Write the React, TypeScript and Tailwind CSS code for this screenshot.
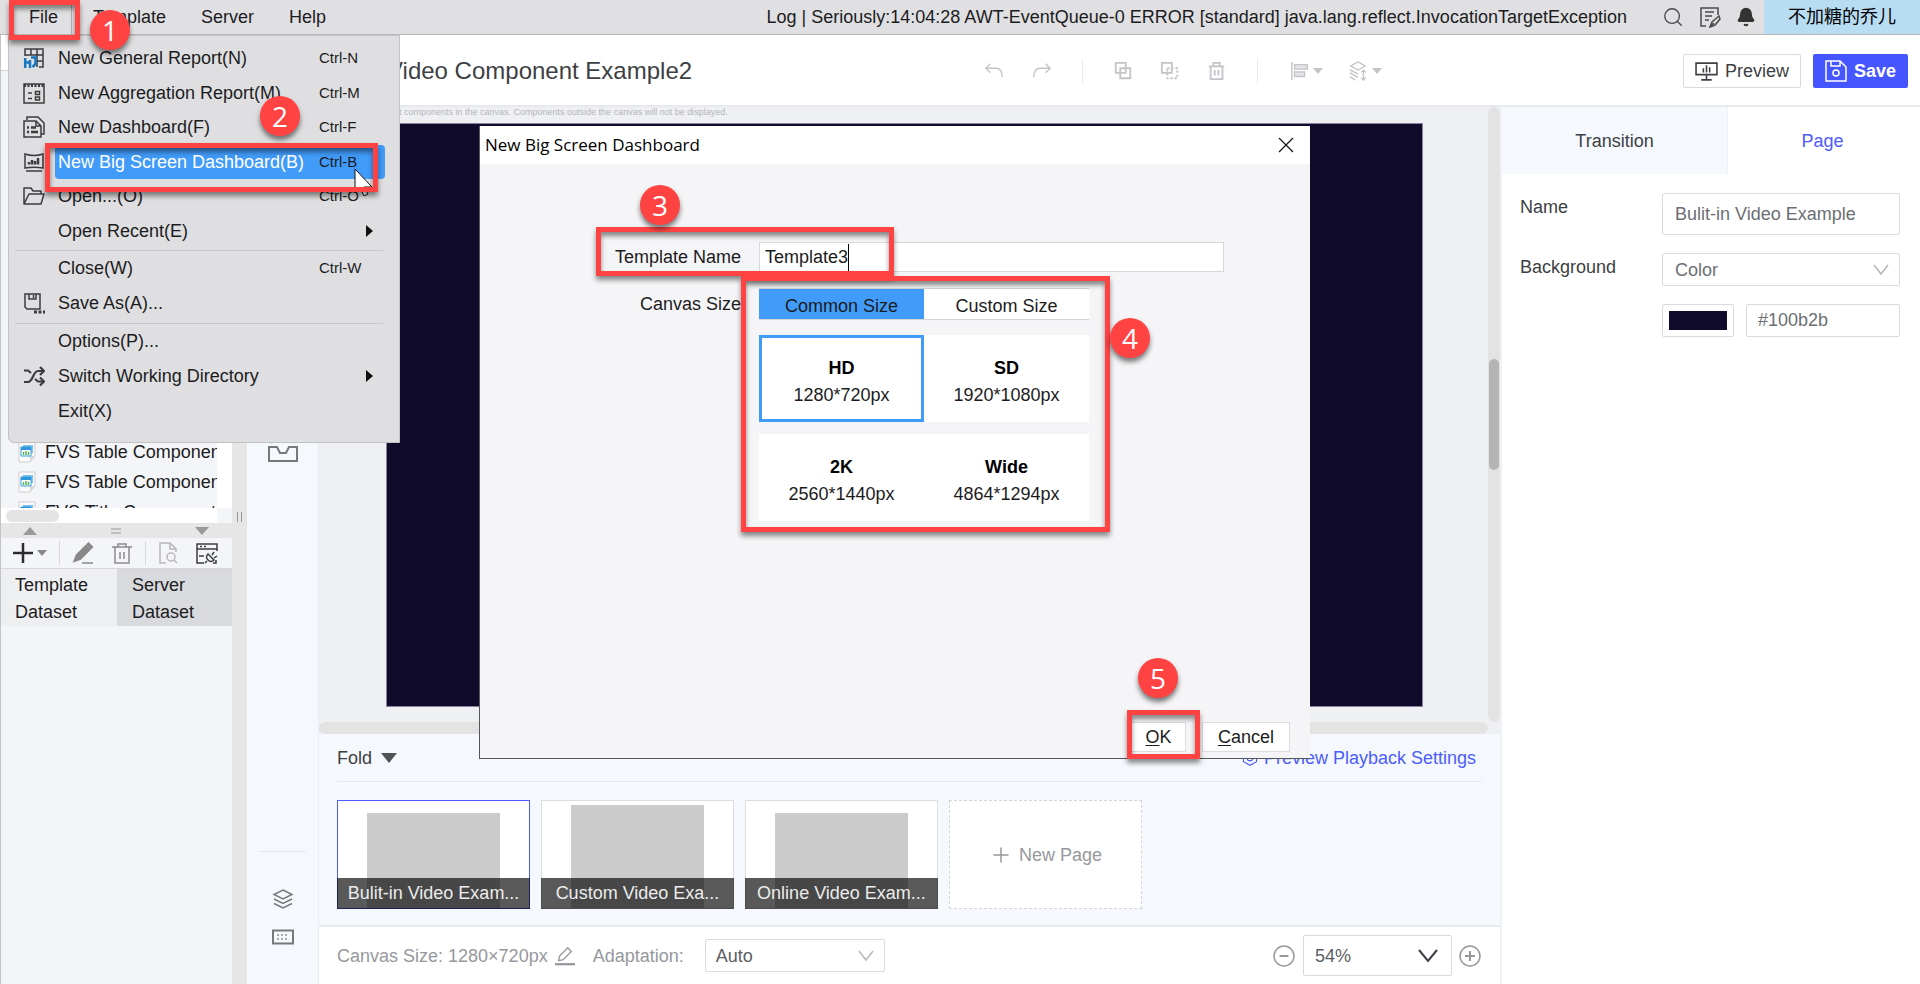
import { useState } from 'react';
import type { ReactNode } from 'react';
import { Bell, ChevronDown, Plus, Search } from 'lucide-react';

// ── Small icons ────────────────────────────────────────────────────────────────

function Icon({ size = 22, className = '', children }: { size?: number; className?: string; children: ReactNode }) {
  return (
    <svg
      width={size}
      height={size}
      viewBox="0 0 22 22"
      fill="none"
      stroke="currentColor"
      strokeWidth="1.5"
      className={`shrink-0 ${className}`}
      aria-hidden="true"
    >
      {children}
    </svg>
  );
}

const GridReportIcon = () => (
  <Icon>
    <path d="M2 9V2h18v18h-4M2 8h18M8 2v6M14 2v18M14 14h6" />
    <path d="M2.200 11v10M2.200 15.500h4M7 13v8" stroke="#1677c2" strokeWidth="2.500" />
    <path d="M8 10.500h4.500V17L9.500 20" stroke="#1677c2" strokeWidth="2.500" />
  </Icon>
);

const AggregationIcon = () => (
  <Icon>
    <rect x="1" y="2" width="20" height="19" />
    <path d="M1 3.500h20" strokeWidth="3" strokeDasharray="2 1.5" />
    <path d="M5 11h4M5 16.500h4M12.500 9.500h4v3h-4zM12.500 15h4v3h-4z" />
  </Icon>
);

const DashboardIcon = () => (
  <Icon>
    <path d="M4 4V1h11l6 6v11h-3" />
    <path d="M1 5h12l5 5v11H1zM13 5v5h5" />
    <path d="M4 11.500h2M8 11.500h5M4 16h2M8 16h7" strokeWidth="2.500" />
  </Icon>
);

const BigScreenIcon = () => (
  <Icon>
    <path d="M2 3c6 2 12 2 18 0v14c-6-1-12-1-18 0zM3 20h16" />
    <path d="M6 13.500V11M9 13.500V9M12 13.500V10M15 13.500V7" strokeWidth="2.500" />
  </Icon>
);

const FolderIcon = () => (
  <Icon>
    <path d="M1 19V3h7l2 3h8v3M1 19 6 9h15l-3 10z" strokeLinejoin="round" />
  </Icon>
);

const SaveAsIcon = () => (
  <Icon>
    <path d="M2 2h15v15H4l-2-2zM6 2v5h7V2M10.500 3v3" />
    <path d="M11 20h11" strokeWidth="3" strokeDasharray="3 1.500" />
  </Icon>
);

const ShuffleIcon = () => (
  <Icon>
    <path d="M1 5.500h4l3 2.500M1 17h4c5 0 5-11 10-11h5M12 14l3 2.500h5" strokeWidth="2.200" />
    <path d="m17 2 4 4-4 4M17 12.500l4 4-4 4" strokeWidth="2.200" />
  </Icon>
);

const TrashIcon = ({ size = 22 }: { size?: number }) => (
  <Icon size={size}>
    <path d="M1 5h20M7 5V2h8v3M4 5v16h14V5M9 10v7M13 10v7" />
  </Icon>
);

const LayersIcon = ({ size = 20 }: { size?: number }) => (
  <Icon size={size}>
    <path d="m11 2 9 4.500-9 4.500-9-4.500zM2 11l9 4.500 9-4.500M2 15.500 11 20l9-4.500" />
  </Icon>
);

const FrmIcon = () => (
  <svg width="18" height="22" viewBox="0 0 18 22" className="shrink-0" aria-hidden="true">
    <path d="M1 1h16v14l-5 6H1z" fill="#fafafa" stroke="#cfcfcf" />
    <path d="M12 21v-6h5z" fill="#d8d8d8" />
    <path d="M5 4h10v8H5z" fill="#7cc4ef" />
    <path d="M3 6h10v9H3z" fill="#fff" stroke="#3b9fdd" />
    <path d="M3 6h10v3H3z" fill="#2f97dc" />
    <path d="M5.500 14v-3M8 14v-4M10.500 14v-3" stroke="#52b153" strokeWidth="1.500" />
  </svg>
);

const Caret = ({ className = '' }: { className?: string }) => (
  <svg width="10" height="6" viewBox="0 0 10 6" className={`shrink-0 ${className}`} aria-hidden="true">
    <path d="M0 0h10L5 6z" fill="currentColor" />
  </svg>
);

// ── Data ───────────────────────────────────────────────────────────────────────

interface MenuEntry {
  label: string;
  icon?: ReactNode;
  shortcut?: string;
  submenu?: boolean;
  active?: boolean;
}

const FILE_MENU_NEW: MenuEntry[] = [
  { label: 'New General Report(N)', icon: <GridReportIcon />, shortcut: 'Ctrl-N' },
  { label: 'New Aggregation Report(M)', icon: <AggregationIcon />, shortcut: 'Ctrl-M' },
  { label: 'New Dashboard(F)', icon: <DashboardIcon />, shortcut: 'Ctrl-F' },
  { label: 'New Big Screen Dashboard(B)', icon: <BigScreenIcon />, shortcut: 'Ctrl-B', active: true },
  { label: 'Open...(O)', icon: <FolderIcon />, shortcut: 'Ctrl-O' },
  { label: 'Open Recent(E)', submenu: true },
];

const FILE_MENU_SAVE: MenuEntry[] = [
  { label: 'Close(W)', shortcut: 'Ctrl-W' },
  { label: 'Save As(A)...', icon: <SaveAsIcon /> },
];

const FILE_MENU_APP: MenuEntry[] = [
  { label: 'Options(P)...' },
  { label: 'Switch Working Directory', icon: <ShuffleIcon />, submenu: true },
  { label: 'Exit(X)' },
];

const TREE = ['FVS Table Component', 'FVS Table Component', 'FVS Title Component I'];

const PAGES = [
  { label: 'Bulit-in Video Exam...', offset: 'mt-3', active: true },
  { label: 'Custom Video Exa...', offset: 'mt-1', active: false },
  { label: 'Online Video Exam...', offset: 'mt-3', active: false },
];

const SIZES = [
  { name: 'HD', size: '1280*720px' },
  { name: 'SD', size: '1920*1080px' },
  { name: '2K', size: '2560*1440px' },
  { name: 'Wide', size: '4864*1294px' },
];

// ── Top bar and File menu ──────────────────────────────────────────────────────

function MenuBar() {
  return (
    <header className="flex h-[35px] shrink-0 items-stretch border-b border-[#b8b8ba] bg-[#e0e0e2] text-[#1c1c1e]">
      <nav className="flex items-stretch">
        <button className="ml-2 border-r border-[#b0b0b2] pr-[13px] pl-[21px]">File</button>
        <button className="ml-[21px]">Template</button>
        <button className="ml-[35px]">Server</button>
        <button className="ml-[35px]">Help</button>
      </nav>
      <p className="ml-auto truncate leading-[34px]">
        Log | Seriously:14:04:28 AWT-EventQueue-0 ERROR [standard] java.lang.reflect.InvocationTargetException
      </p>
      <div className="ml-[35px] flex items-center gap-[15px] pr-2 text-[#4a4a4c]">
        <button aria-label="Search">
          <Search size={22} strokeWidth={1.5} />
        </button>
        <button aria-label="Log">
          <Icon>
            <path d="M7 20H2V2h17v7M6 6h9M6 10h7M6 14h4" />
            <path d="m20 10-7 6-2 5 5-2 5-6zM11 21l4-4" />
          </Icon>
        </button>
        <button aria-label="Notifications">
          <Bell size={20} fill="#333" stroke="#333" />
        </button>
      </div>
      <button className="w-[156px] bg-[#b8dcf2] text-black">不加糖的乔儿</button>
    </header>
  );
}

function MenuRow({ entry }: { entry: MenuEntry }) {
  return (
    <li className="flex">
      <button className="flex w-full items-center pl-[14px] text-left">
        <span className="flex w-8 shrink-0 text-[#3c3c3e]">{entry.icon}</span>
        <span
          className={
            entry.active
              ? 'mr-3.5 flex h-full flex-1 items-center rounded bg-[#419bf9] pl-[3px] text-white'
              : 'mr-3.5 flex h-full flex-1 items-center pl-[3px]'
          }
        >
          {entry.label}
          {entry.shortcut && <kbd className="ml-auto w-[66px] font-[inherit] text-[15px] text-[#1c1c1e]">{entry.shortcut}</kbd>}
          {entry.submenu && (
            <svg width="7" height="12" viewBox="0 0 7 12" className="mr-3 ml-auto" aria-hidden="true">
              <path d="M0 0v12l7-6z" fill="#111" />
            </svg>
          )}
        </span>
      </button>
    </li>
  );
}

function FileMenu() {
  return (
    <div className="absolute top-[35px] left-2 w-[392px] rounded-bl-md border border-[#c2c2c4] bg-[#dfdfe1] pt-[5px] pb-3.5 text-[#1c1c1e]">
      <ul className="grid h-[207px] auto-rows-fr">
        {FILE_MENU_NEW.map((entry) => (
          <MenuRow key={entry.label} entry={entry} />
        ))}
      </ul>
      <hr className="mt-0.5 mr-4 ml-1.5 border-[#c8c8ca]" />
      <ul className="grid h-[69px] auto-rows-fr">
        {FILE_MENU_SAVE.map((entry) => (
          <MenuRow key={entry.label} entry={entry} />
        ))}
      </ul>
      <hr className="mt-[3px] mr-4 ml-1.5 border-[#c8c8ca]" />
      <ul className="grid h-[104px] auto-rows-fr">
        {FILE_MENU_APP.map((entry) => (
          <MenuRow key={entry.label} entry={entry} />
        ))}
      </ul>
    </div>
  );
}

// ── Left side: template tree and datasets ──────────────────────────────────────

function Sidebar() {
  return (
    <aside className="flex w-[232px] shrink-0 flex-col border-l border-[#c4c4c6] bg-[#f4f5f8] text-[#1c1c1e]">
      <div className="h-[36px] shrink-0 border-b border-[#d4d4d8] bg-white" />
      <div className="flex h-[437px] shrink-0 flex-col justify-start overflow-hidden bg-white pr-[15px]">
        <ul className="bg-[#f4f5f8] pt-[366px]">
          {TREE.map((name, i) => (
            <li key={i} className="flex h-[30px] items-center gap-[9px] overflow-hidden pl-[17px] whitespace-nowrap">
              <FrmIcon />
              {name}
            </li>
          ))}
        </ul>
      </div>
      <div className="flex h-[15px] shrink-0 items-center bg-white pl-[5px]">
        <div className="h-3 w-[53px] rounded-full bg-[#e4e4e4]" />
        <div className="ml-auto h-full w-[15px] bg-[#f4f5f8]" />
      </div>
      <div className="flex h-[15px] shrink-0 items-center justify-between bg-[#e6e6e6] pr-[23px] pl-[22px] text-[#999]">
        <svg width="14" height="8" viewBox="0 0 14 8" aria-hidden="true">
          <path d="M0 8h14L7 0z" fill="currentColor" />
        </svg>
        <svg width="10" height="6" viewBox="0 0 10 6" aria-hidden="true">
          <path d="M0 1h10M0 5h10" stroke="currentColor" />
        </svg>
        <svg width="14" height="8" viewBox="0 0 14 8" aria-hidden="true">
          <path d="M0 0h14L7 8z" fill="currentColor" />
        </svg>
      </div>
      <div className="flex h-[31px] shrink-0 items-center border-b border-[#d6d6da] pr-3.5 pl-[11px] text-[#555]">
        <button aria-label="Add dataset" className="flex items-center gap-[3px]">
          <Icon>
            <path d="M11 1v20M1 11h20" stroke="#2c2c2e" strokeWidth="2.500" />
          </Icon>
          <Caret className="text-[#888]" />
        </button>
        <span className="ml-3 h-6 w-px bg-[#d8d8dc]" />
        <button aria-label="Edit" className="ml-3 text-[#888]">
          <Icon>
            <path d="M2 19.500 4.500 13 14 3.500l4 4L8.500 17z" fill="currentColor" />
            <path d="m15 2.500 1.500-1.500 4 4L19 6.500z" fill="currentColor" />
            <path d="M10 21h11" />
          </Icon>
        </button>
        <button aria-label="Delete" className="ml-[17px] text-[#8a8a8c]">
          <TrashIcon />
        </button>
        <span className="ml-3 h-6 w-px bg-[#d8d8dc]" />
        <button aria-label="Preview dataset" className="ml-3 text-[#b8b8ba]">
          <Icon>
            <path d="M8 21H2V1h10l6 6v3M12 1v6h6" />
            <circle cx="13" cy="15" r="4" />
            <path d="m16 18 3 3" />
          </Icon>
        </button>
        <button aria-label="Connection" className="ml-auto text-[#3c3c3e]">
          <Icon>
            <path d="M8 21H1V2h20v7M1 7h20M4 4.500h2M8 4.500h2M3 14h5" />
            <path d="m12 12 6 6c-2 2-4 2-6 0s-2-4 0-6zM16 13l2-3M18 16l3-2M11 19l-2 2M20 18v3h-3" />
          </Icon>
        </button>
      </div>
      <div className="flex shrink-0 leading-[27px]">
        <button className="w-[116px] bg-[#eeeff1] pt-[3px] pl-3.5 text-left">
          Template
          <br />
          Dataset
        </button>
        <button className="flex-1 bg-[#d8dadd] pt-[3px] pl-[15px] text-left">
          Server
          <br />
          Dataset
        </button>
      </div>
    </aside>
  );
}

// ── Editor ─────────────────────────────────────────────────────────────────────

function EditorHeader() {
  return (
    <div className="flex h-[72px] shrink-0 items-center border-b-2 border-[#e8e9ee] bg-white pt-0.5 pr-3">
      <h1 className="w-[737px] shrink-0 pl-[140px] text-2xl text-[#3d3f44]">Video Component Example2</h1>
      <div className="flex items-center text-[#c3c4c8]">
        <button aria-label="Undo">
          <Icon size={20}>
            <path d="m7 3-5 5 5 5M2 8h11c5 0 7 3 7 10" />
          </Icon>
        </button>
        <button aria-label="Redo" className="ml-7">
          <Icon size={20}>
            <path d="m15 3 5 5-5 5M20 8H9c-5 0-7 3-7 10" />
          </Icon>
        </button>
        <span className="ml-[30px] h-6 w-px bg-[#e8e8ec]" />
        <button aria-label="Group" className="ml-[30px]">
          <Icon size={20}>
            <path d="M3 2h11v11H3zM8 8h11v11H8z" strokeWidth="2" />
          </Icon>
        </button>
        <button aria-label="Ungroup" className="ml-[27px]">
          <Icon size={20}>
            <path d="M2 2h11v11H2z" strokeWidth="2" />
            <path d="M8 8h11v11H8z" strokeWidth="2" strokeDasharray="2.500 2" />
          </Icon>
        </button>
        <button aria-label="Delete" className="ml-[27px]">
          <Icon size={20}>
            <path d="M2 6h17M7 5V2h7v3M4 6v14h13V6M8.500 10v6M12.500 10v6" strokeWidth="2" />
          </Icon>
        </button>
        <span className="ml-[30px] h-6 w-px bg-[#e8e8ec]" />
        <button aria-label="Align" className="ml-8 flex items-center gap-[3px]">
          <Icon size={20}>
            <path d="M2 1v20" />
            <path d="M5 4h14v5H5zM5 12h11v5H5z" fill="#e4e4e8" />
          </Icon>
          <Caret />
        </button>
        <button aria-label="Arrange" className="ml-[25px] flex items-center gap-1">
          <Icon size={20}>
            <path d="m11 1 8 4.500-8 4.500-8-4.500zM2 9.500l9 5M2 13l9 5M2 17l6 4M17 10v11M14.500 12.500 17 10l2.500 2.500M14.500 18.500 17 21l2.500-2.500" />
          </Icon>
          <Caret />
        </button>
      </div>
      <button className="ml-auto flex h-[34px] items-center gap-[7px] rounded-xs border border-[#d9dade] bg-white px-[11px] text-[#3d3f44]">
        <Icon size={23}>
          <path d="M1 3h20v11H1zM6 19h10M11 14v5" />
          <path d="M8 12V8M11 12V5M14 12V7" />
        </Icon>
        Preview
      </button>
      <button className="ml-3 flex h-[34px] items-center gap-[7px] rounded-xs bg-[#4555ff] px-3 font-bold text-white">
        <Icon>
          <path d="M1 1h14l6 6v14H1zM6 1v5h9V1" />
          <circle cx="11" cy="13" r="3" />
        </Icon>
        Save
      </button>
    </div>
  );
}

function ToolStrip() {
  return (
    <div className="flex w-[72px] shrink-0 flex-col items-center border-r border-[#ecedf2] bg-[#f5f9fd] pt-[326px] pb-9 text-[#76787c]">
      <button aria-label="Assets">
        <svg width="32" height="32" viewBox="0 0 32 32" fill="none" stroke="currentColor" strokeWidth="2" aria-hidden="true">
          <path d="M2 14h8l3 6h6l3-6h8v14H2zM4 10l5-8h14l5 8" />
        </svg>
      </button>
      <hr className="mt-auto mb-9 w-[47px] border-[#e4e6ea]" />
      <button aria-label="Layers">
        <LayersIcon size={22} />
      </button>
      <button aria-label="Keyboard" className="mt-4">
        <Icon>
          <path d="M1 4.500h20v13H1z" strokeWidth="2" />
          <path d="M5 9h12M5 13h12" strokeWidth="2" strokeDasharray="2 2" opacity="0.6" />
        </Icon>
      </button>
    </div>
  );
}

function PageStrip() {
  return (
    <section className="h-[191px] shrink-0 bg-[#f5f9fd] pl-[18px] text-[#3d3f44]">
      <div className="mr-[18px] flex h-12 items-center border-b border-[#e6e8ec]">
        <button className="flex items-center gap-[9px]">
          Fold
          <svg width="16" height="10" viewBox="0 0 16 10" aria-hidden="true">
            <path d="M0 0h16L8 10z" fill="#505256" />
          </svg>
        </button>
        <a href="#playback" className="mr-1.5 ml-auto flex items-center gap-1.5 text-[#4c5cff]">
          <Icon size={16}>
            <path d="m11 1 9 5v10l-9 5-9-5V6z" />
            <circle cx="11" cy="11" r="4" />
          </Icon>
          Preview Playback Settings
        </a>
      </div>
      <div className="mt-[18px] flex gap-[11px]">
        {PAGES.map((page) => (
          <button
            key={page.label}
            className={
              page.active
                ? 'relative flex h-[109px] w-[193px] flex-col items-center border border-[#4c5cff] bg-white'
                : 'relative flex h-[109px] w-[193px] flex-col items-center border border-[#dcdde0] bg-white'
            }
          >
            <span className={`${page.offset} w-[133px] flex-1 bg-[#ccc]`} />
            <span className="absolute -inset-x-px -bottom-px h-[31px] truncate bg-black/65 leading-[30px] text-[#ececec]">
              {page.label}
            </span>
          </button>
        ))}
        <button className="flex h-[109px] w-[193px] items-center justify-center gap-1.5 border border-dashed border-[#d4d5d9] bg-white text-[#96989d]">
          <Plus size={24} strokeWidth={1.5} />
          New Page
        </button>
      </div>
    </section>
  );
}

function StatusBar() {
  return (
    <footer className="flex h-[59px] shrink-0 items-center border-t-2 border-[#e8e9ee] bg-white pr-[19px] pl-[18px] text-[#96989d]">
      <span>Canvas Size: 1280×720px</span>
      <button aria-label="Edit canvas size" className="ml-[7px]">
        <Icon size={20}>
          <path d="m4 16 1-5 9-9 4 4-9 9z" />
          <path d="M0 20h22" strokeWidth="2.500" />
        </Icon>
      </button>
      <label htmlFor="adaptation" className="ml-[18px]">
        Adaptation:
      </label>
      <div className="relative ml-[21px]">
        <select
          id="adaptation"
          className="h-[33px] w-[180px] appearance-none rounded-xs border border-[#d9dade] bg-white pl-2.5 text-[#5c5e63]"
        >
          <option>Auto</option>
        </select>
        <svg width="16" height="12" viewBox="0 0 16 12" className="pointer-events-none absolute top-[11px] right-[11px]" aria-hidden="true">
          <path d="m1 1 7 9 7-9" fill="none" stroke="#b4b6ba" strokeWidth="1.500" />
        </svg>
      </div>
      <button aria-label="Zoom out" className="ml-auto">
        <Icon size={22}>
          <circle cx="11" cy="11" r="10" />
          <path d="M6.500 11h9" strokeWidth="2" />
        </Icon>
      </button>
      <div className="relative ml-2">
        <select
          aria-label="Zoom"
          className="h-[41px] w-[149px] appearance-none rounded-xs border border-[#d9dade] bg-white pl-[11px] text-[#5c5e63]"
        >
          <option>54%</option>
        </select>
        <svg width="20" height="14" viewBox="0 0 20 14" className="pointer-events-none absolute top-3.5 right-3.5" aria-hidden="true">
          <path d="m1 1 9 11 9-11" fill="none" stroke="#3d3f44" strokeWidth="2" />
        </svg>
      </div>
      <button aria-label="Zoom in" className="ml-[7px]">
        <Icon size={22}>
          <circle cx="11" cy="11" r="10" />
          <path d="M6 11h10M11 6v10" strokeWidth="2" />
        </Icon>
      </button>
    </footer>
  );
}

function CanvasArea() {
  return (
    <main className="flex min-w-0 flex-1 flex-col bg-[#eff0f4]">
      <div className="flex min-h-0 flex-1">
        <div className="flex flex-1 flex-col pr-[65px] pb-[15px] pl-[67px]">
          <p className="h-4 text-[9px] leading-[10px] text-[#b4b5ba]">
            <span className="ml-[13px]">t components in the canvas. Components outside the canvas will not be displayed.</span>
          </p>
          <div className="flex-1 border border-[#86849a] bg-[#100b2b]" />
        </div>
        <div className="w-3 rounded-full bg-[#e3e3e3] pt-[252px]">
          <div className="mx-px h-[111px] rounded-full bg-[#b4b4b4]" />
        </div>
      </div>
      <div className="h-3 shrink-0 pr-3">
        <div className="h-full rounded-full bg-[#e3e3e3]" />
      </div>
      <PageStrip />
      <StatusBar />
    </main>
  );
}

function PropertyPanel() {
  return (
    <aside className="w-[420px] shrink-0 border-l-2 border-[#eef1f5] bg-white text-[#3d3f44]">
      <div className="flex h-[67px] pr-[3px]">
        <button className="w-[226px] border-r border-[#eef1f5] bg-[#f5f9fd]">Transition</button>
        <button className="flex-1 text-[#4c5cff]">Page</button>
      </div>
      <div className="grid grid-cols-[142px_minmax(0,1fr)] gap-y-[18px] pt-[19px] pr-5 pl-[18px]">
        <label htmlFor="page-name" className="pt-0.5">
          Name
        </label>
        <input
          id="page-name"
          defaultValue="Bulit-in Video Example"
          className="h-[42px] w-full rounded-xs border border-[#d9dade] px-3 text-[#6c6e73]"
        />
        <label htmlFor="page-background" className="pt-0.5">
          Background
        </label>
        <div className="relative">
          <select
            id="page-background"
            className="h-[33px] w-full appearance-none rounded-xs border border-[#d9dade] bg-white pl-3 text-[#6c6e73]"
          >
            <option>Color</option>
          </select>
          <svg width="16" height="12" viewBox="0 0 16 12" className="pointer-events-none absolute top-[11px] right-[11px]" aria-hidden="true">
            <path d="m1 1 7 9 7-9" fill="none" stroke="#b4b6ba" strokeWidth="1.500" />
          </svg>
        </div>
        <div className="col-start-2 flex gap-3">
          <button aria-label="Pick colour" className="h-[33px] w-[72px] rounded-xs border border-[#d9dade] p-1.5">
            <span className="block h-full w-full bg-[#100b2b]" />
          </button>
          <input
            aria-label="Background colour"
            defaultValue="#100b2b"
            className="h-[33px] min-w-0 flex-1 rounded-xs border border-[#d9dade] px-[11px] text-[#6c6e73]"
          />
        </div>
      </div>
    </aside>
  );
}

// ── New Big Screen Dashboard dialog ────────────────────────────────────────────

function NewDashboardDialog() {
  const [name, setName] = useState('Template3');
  const [selected, setSelected] = useState('HD');

  return (
    <div
      role="dialog"
      aria-labelledby="dialog-title"
      className="absolute top-[126px] left-[479px] flex h-[633px] w-[831px] flex-col border-b border-l border-[#55565a] bg-[#f5f5f7] text-[#1c1c1e]"
    >
      <div className="flex h-[38px] items-center justify-between bg-white pr-4 pl-[5px] text-black">
        <h2 id="dialog-title" className="font-['Open_Sans','Noto_Sans',sans-serif] text-[17px]">
          New Big Screen Dashboard
        </h2>
        <button aria-label="Close">
          <svg width="16" height="16" viewBox="0 0 16 16" stroke="#111" strokeWidth="1.2" aria-hidden="true">
            <path d="m1 1 14 14M15 1 1 15" />
          </svg>
        </button>
      </div>
      <div className="grid grid-cols-[261px_1fr] gap-x-[18px] pt-[78px] pr-[86px]">
        <label htmlFor="template-name" className="text-right leading-[30px]">
          Template Name
        </label>
        <div className="flex h-[30px] items-center border border-[#d8d8dc] bg-white pl-[5px]">
          <input
            id="template-name"
            value={name}
            onChange={(e) => setName(e.target.value)}
            className="field-sizing-content outline-none"
          />
          <span className="h-[27px] w-px bg-black" />
        </div>
        <span className="mt-4 text-right leading-[32px]">Canvas Size</span>
        <div className="mt-4 w-[330px]">
          <div className="grid grid-cols-2 border-y border-[#d4d4d8] leading-[34px]">
            <button className="h-[30px] bg-[#419bf9]">Common Size</button>
            <button className="h-[30px] bg-white">Custom Size</button>
          </div>
          <div className="mt-[15px] grid grid-cols-2 gap-y-3">
            {SIZES.map((s) => (
              <button
                key={s.name}
                onClick={() => setSelected(s.name)}
                className={
                  selected === s.name
                    ? 'h-[87px] border-[3px] border-[#419bf9] bg-white pt-1.5 leading-[27px]'
                    : 'h-[87px] border-[3px] border-white bg-white pt-1.5 leading-[27px]'
                }
              >
                <b className="block text-black">{s.name}</b>
                {s.size}
              </button>
            ))}
          </div>
        </div>
      </div>
      <div className="mt-auto mr-5 mb-1.5 flex justify-end gap-4">
        <button className="h-[30px] w-[55px] border border-[#dcdce0] bg-white">
          <span className="underline underline-offset-2">O</span>K
        </button>
        <button className="h-[30px] w-[88px] border border-[#dcdce0] bg-white">
          <span className="underline underline-offset-2">C</span>ancel
        </button>
      </div>
    </div>
  );
}

// ── Step markers ───────────────────────────────────────────────────────────────

function StepBox({ className }: { className: string }) {
  return (
    <div
      className={`pointer-events-none absolute border-5 border-[#ff4343] shadow-[0_4px_5px_rgba(0,0,0,0.45),inset_0_4px_5px_rgba(0,0,0,0.45)] ${className}`}
    />
  );
}

function StepBadge({ n, className }: { n: number; className: string }) {
  return (
    <div
      className={`pointer-events-none absolute flex size-10 items-center justify-center rounded-full bg-[#ff4343] font-['Open_Sans',sans-serif] text-[28px] text-white shadow-[0_4px_5px_rgba(0,0,0,0.5)] ${className}`}
    >
      {n}
    </div>
  );
}

export default function App() {
  return (
    <div className="relative flex min-h-screen flex-col overflow-hidden bg-white font-['Liberation_Sans',Arial,'Noto_Sans_CJK_SC',sans-serif] text-[18px] leading-[24px]">
      <MenuBar />
      <div className="flex flex-1">
        <Sidebar />
        <div className="flex w-[15px] shrink-0 items-start justify-center bg-[#e6e6e6] pt-[477px]">
          <span className="h-[10px] w-[5px] border-x border-[#999]" />
        </div>
        <div className="flex min-w-0 flex-1 flex-col">
          <EditorHeader />
          <div className="flex flex-1">
            <ToolStrip />
            <CanvasArea />
            <PropertyPanel />
          </div>
        </div>
      </div>

      <NewDashboardDialog />
      <FileMenu />

      {/* Mouse pointer over the highlighted entry */}
      <svg width="20" height="28" viewBox="0 0 20 28" className="absolute top-[168px] left-[354px]" aria-hidden="true">
        <path d="M1 1v24l5-5 4 8 4-2-4-7h8z" fill="#fff" stroke="#111" />
      </svg>

      <StepBox className="top-0 left-[9px] h-10 w-[71px]" />
      <StepBox className="top-[143px] left-[45px] h-[49px] w-[333px]" />
      <StepBox className="top-[227px] left-[596px] h-[49px] w-[298px]" />
      <StepBox className="top-[276px] left-[741px] h-[256px] w-[369px]" />
      <StepBox className="top-[710px] left-[1127px] h-[49px] w-[73px]" />
      <StepBadge n={1} className="top-2.5 left-[90px]" />
      <StepBadge n={2} className="top-24 left-[260px]" />
      <StepBadge n={3} className="top-[185px] left-[640px]" />
      <StepBadge n={4} className="top-[318px] left-[1110px]" />
      <StepBadge n={5} className="top-[658px] left-[1138px]" />
    </div>
  );
}
